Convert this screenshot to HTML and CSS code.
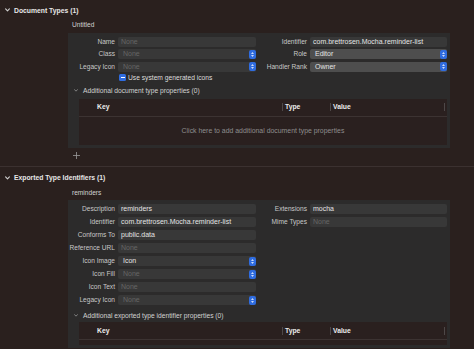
FILE: index.html
```html
<!DOCTYPE html>
<html lang="en">

<head>
  <meta charset="UTF-8" />
  <meta name="viewport" content="width=device-width, initial-scale=1.0" />
  <title>Info - Document Types</title>
  <link rel="stylesheet" href="styles.css">
</head>

<body>
  <div class="section">
    <div class="section-head">
      <svg class="chevron" width="5" height="4" viewBox="0 0 5 4"><polyline points="0.6,0.8 2.5,2.8 4.4,0.8" /></svg>
      Document Types (1)
    </div>
    <div class="item-title">Untitled</div>
    <div class="panel">
      <div class="form">
        <div class="col">
          <div class="label">Name</div>
          <div class="field"><span class="placeholder">None</span></div>
          <div class="label">Class</div>
          <div class="field popup"><span class="placeholder">None</span><svg class="stepper" viewBox="0 0 7 9"><rect width="7" height="9" rx="2" /><path d="M2 3.8 L3.5 2.3 L5 3.8 Z M2 5.2 L3.5 6.7 L5 5.2 Z" /></svg></div>
          <div class="label">Legacy Icon</div>
          <div class="field popup"><span class="placeholder">None</span><svg class="stepper" viewBox="0 0 7 9"><rect width="7" height="9" rx="2" /><path d="M2 3.8 L3.5 2.3 L5 3.8 Z M2 5.2 L3.5 6.7 L5 5.2 Z" /></svg></div>
        </div>
        <div class="col col-right">
          <div class="label">Identifier</div>
          <div class="field"><span>com.brettrosen.Mocha.reminder-list</span></div>
          <div class="label">Role</div>
          <div class="field popup popup-light"><span>Editor</span><svg class="stepper" viewBox="0 0 7 9"><rect width="7" height="9" rx="2" /><path d="M2 3.8 L3.5 2.3 L5 3.8 Z M2 5.2 L3.5 6.7 L5 5.2 Z" /></svg></div>
          <div class="label">Handler Rank</div>
          <div class="field popup popup-light"><span>Owner</span><svg class="stepper" viewBox="0 0 7 9"><rect width="7" height="9" rx="2" /><path d="M2 3.8 L3.5 2.3 L5 3.8 Z M2 5.2 L3.5 6.7 L5 5.2 Z" /></svg></div>
        </div>
      </div>
      <div class="check-row">
        <span class="checkbox"></span>
        Use system generated icons
      </div>
      <div class="sub-head">
        <svg class="chevron small" width="4" height="3" viewBox="0 0 4 3"><polyline points="0.5,0.6 2,2.2 3.5,0.6" /></svg>
        Additional document type properties (0)
      </div>
      <div class="table">
        <div class="table-head">
          <div class="th th-key">Key</div>
          <div class="th">Type</div>
          <div class="th th-last">Value</div>
        </div>
        <div class="table-body">Click here to add additional document type properties</div>
      </div>
    </div>
    <div class="add-row">
      <svg width="7" height="7" viewBox="0 0 7 7"><path d="M3.5 0 V7 M0 3.5 H7" /></svg>
    </div>
  </div>

  <div class="divider"></div>

  <div class="section section-second">
    <div class="section-head">
      <svg class="chevron" width="5" height="4" viewBox="0 0 5 4"><polyline points="0.6,0.8 2.5,2.8 4.4,0.8" /></svg>
      Exported Type Identifiers (1)
    </div>
    <div class="item-title">reminders</div>
    <div class="panel">
      <div class="form">
        <div class="col col-tall">
          <div class="label">Description</div>
          <div class="field"><span>reminders</span></div>
          <div class="label">Identifier</div>
          <div class="field"><span>com.brettrosen.Mocha.reminder-list</span></div>
          <div class="label">Conforms To</div>
          <div class="field"><span>public.data</span></div>
          <div class="label">Reference URL</div>
          <div class="field"><span class="placeholder">None</span></div>
          <div class="label">Icon Image</div>
          <div class="field popup"><span>Icon</span><svg class="stepper" viewBox="0 0 7 9"><rect width="7" height="9" rx="2" /><path d="M2 3.8 L3.5 2.3 L5 3.8 Z M2 5.2 L3.5 6.7 L5 5.2 Z" /></svg></div>
          <div class="label">Icon Fill</div>
          <div class="field popup"><span class="placeholder">None</span><svg class="stepper" viewBox="0 0 7 9"><rect width="7" height="9" rx="2" /><path d="M2 3.8 L3.5 2.3 L5 3.8 Z M2 5.2 L3.5 6.7 L5 5.2 Z" /></svg></div>
          <div class="label">Icon Text</div>
          <div class="field"><span class="placeholder">None</span></div>
          <div class="label">Legacy Icon</div>
          <div class="field popup"><span class="placeholder">None</span><svg class="stepper" viewBox="0 0 7 9"><rect width="7" height="9" rx="2" /><path d="M2 3.8 L3.5 2.3 L5 3.8 Z M2 5.2 L3.5 6.7 L5 5.2 Z" /></svg></div>
        </div>
        <div class="col col-right col-tall">
          <div class="label">Extensions</div>
          <div class="field"><span>mocha</span></div>
          <div class="label">Mime Types</div>
          <div class="field"><span class="placeholder">None</span></div>
        </div>
      </div>
      <div class="sub-head sub-head-second">
        <svg class="chevron small" width="4" height="3" viewBox="0 0 4 3"><polyline points="0.5,0.6 2,2.2 3.5,0.6" /></svg>
        Additional exported type identifier properties (0)
      </div>
      <div class="table">
        <div class="table-head">
          <div class="th th-key">Key</div>
          <div class="th">Type</div>
          <div class="th th-last">Value</div>
        </div>
        <div class="table-body table-body-open"></div>
      </div>
    </div>
  </div>
</body>

</html>
```

FILE: styles.css
```css
body {
  margin: 0;
  width: 474px;
  height: 349px;
  overflow: hidden;
  background-color: #2a201e;
  font-family: "Liberation Sans", Arial, sans-serif;
  color: #d6d6d6;
}

.section {
  padding-top: 5px;
}

.section-second {
  padding-top: 6px;
}

.section-head {
  display: flex;
  align-items: center;
  gap: 4px;
  height: 10px;
  padding-left: 5px;
  font-size: 6.8px;
  font-weight: bold;
  color: #e6e6e6;
}

.chevron polyline {
  fill: none;
  stroke: #d0d0d0;
  stroke-width: 1.1;
  stroke-linecap: round;
  stroke-linejoin: round;
}

.chevron.small polyline {
  stroke: #8a8a8a;
  stroke-width: 0.9;
}

.item-title {
  margin: 5px 0 2.5px 72px;
  height: 10px;
  line-height: 10px;
  font-size: 6.6px;
  color: #d2d2d2;
}

.panel {
  margin-left: 68px;
  width: 382px;
  padding: 4px 0 3px;
  background-color: #2c2b2b;
}

.form {
  display: flex;
}

.col {
  display: grid;
  grid-template-columns: 47px 138px;
  column-gap: 3px;
  row-gap: 2.5px;
  align-content: start;
}

.col-tall {
  row-gap: 3px;
}

.col-right {
  grid-template-columns: 48px 137px;
  margin-left: 3px;
}

.label {
  text-align: right;
  font-size: 6.6px;
  line-height: 10px;
  color: #c8c8c8;
  white-space: nowrap;
}

.field {
  display: flex;
  align-items: center;
  justify-content: space-between;
  height: 10px;
  padding-left: 3px;
  border-radius: 2px;
  background-color: #383838;
  font-size: 7px;
  line-height: 10px;
  color: #e4e4e4;
  white-space: nowrap;
}

.placeholder {
  color: #666;
}

.popup {
  padding-left: 5px;
}

.popup-light {
  background-color: #4e4e4e;
}

.stepper {
  width: 7px;
  height: 9px;
  margin-right: 0.5px;
}

.stepper rect {
  fill: #2f6ce0;
}

.stepper path {
  fill: #ffffff;
}

.check-row {
  display: flex;
  align-items: center;
  gap: 2px;
  height: 10px;
  margin: 1px 0 0 51px;
  font-size: 6.7px;
  color: #dcdcdc;
}

.checkbox {
  position: relative;
  width: 7px;
  height: 7px;
  border-radius: 1.5px;
  background-color: #2f6ce0;
}

.checkbox::after {
  content: "";
  position: absolute;
  left: 1.5px;
  top: 3px;
  width: 4px;
  height: 1px;
  background-color: #fff;
}

.sub-head {
  display: flex;
  align-items: center;
  gap: 5px;
  height: 10px;
  margin: 3px 0 3px 6px;
  font-size: 6.7px;
  color: #d2d2d2;
}

.sub-head-second {
  margin-top: 5px;
  margin-bottom: 2px;
}

.table {
  width: 368px;
  margin-left: 11px;
  background-color: #2a201f;
}

.table-head {
  display: grid;
  grid-template-columns: 203px 48px 115px;
  align-items: center;
  height: 17px;
  border-bottom: 1px solid #3c3332;
  font-size: 6.8px;
  font-weight: bold;
  color: #ececec;
}

.th {
  height: 8px;
  line-height: 8px;
  padding-left: 2px;
  border-left: 1px solid #4e4848;
}

.th-key {
  padding-left: 18px;
  border-left: none;
}

.th-last {
  border-right: 1px solid #4e4848;
}

.table-body {
  display: flex;
  align-items: center;
  justify-content: center;
  height: 28px;
  font-size: 6.9px;
  color: #8e8e8e;
}

.table-body-open {
  height: 5px;
}

.add-row {
  display: flex;
  align-items: center;
  height: 16px;
  margin-left: 73px;
}

.add-row path {
  stroke: #9a9a9a;
  stroke-width: 0.8;
}

.divider {
  height: 1px;
  margin-top: 2px;
  background-color: #3b3130;
}
```
